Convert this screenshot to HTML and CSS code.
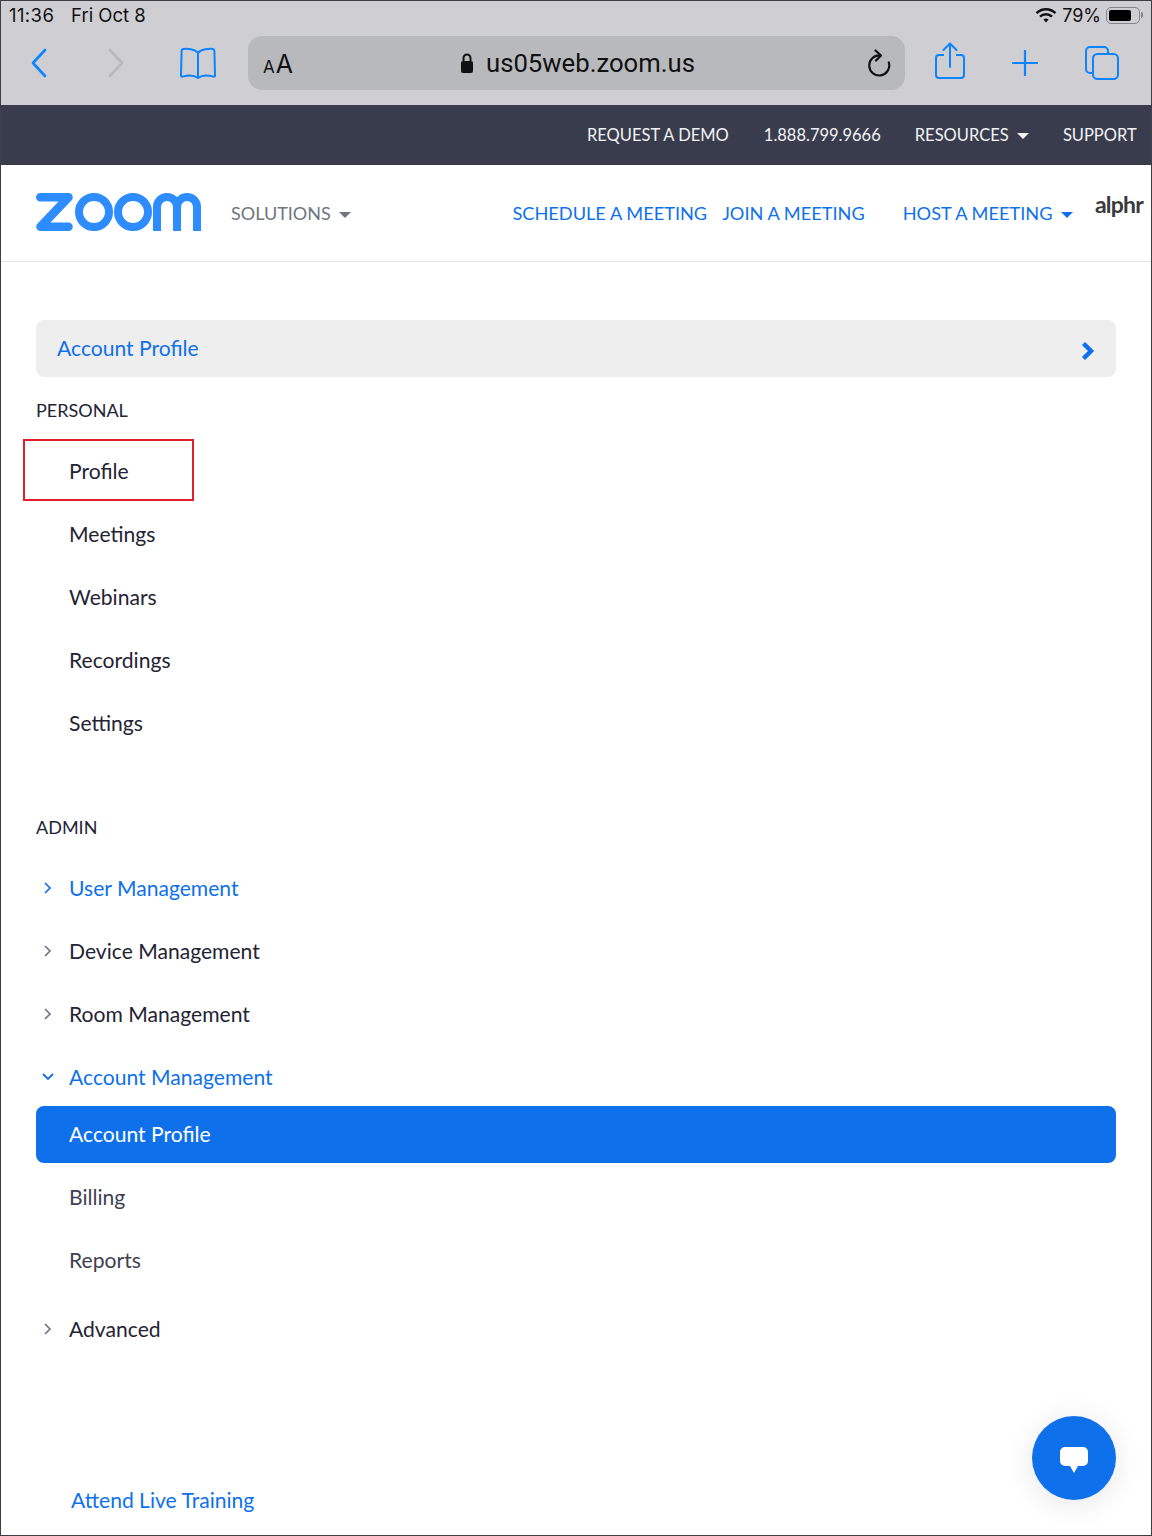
FILE: index.html
```html
<!DOCTYPE html>
<html lang="en">
<head>
<meta charset="utf-8">
<title>Zoom Account Profile</title>
<link rel="stylesheet" href="styles.css">
</head>
<body>
<div class="frame">
  <div class="browser">
    <div class="status">
      <span class="time">11:36</span>
      <span class="date">Fri Oct 8</span>
      <span class="status-right">
        <svg class="wifi" width="22" height="16" viewBox="0 0 22 16"><path d="M1.5 6.2a13.6 13.6 0 0 1 19 0" fill="none" stroke="#111" stroke-width="2.5"/><path d="M5 9.6a8.6 8.6 0 0 1 12 0" fill="none" stroke="#111" stroke-width="2.5"/><path d="M8.4 12.6a3.9 3.9 0 0 1 5.2 0L11 15.4z" fill="#111"/></svg>
        <span class="pct">79%</span>
        <span class="battery"><span class="battery-fill"></span></span>
        <span class="battery-tip"></span>
      </span>
    </div>
    <div class="toolbar">
      <svg class="ic back" width="18" height="30" viewBox="0 0 18 30"><path d="M15 2 3 15l12 13" fill="none" stroke="#0a84ff" stroke-width="2.6" stroke-linecap="round" stroke-linejoin="round"/></svg>
      <svg class="ic forward" width="18" height="30" viewBox="0 0 18 30"><path d="M3 2l12 13L3 28" fill="none" stroke="#b9b9bd" stroke-width="2.6" stroke-linecap="round" stroke-linejoin="round"/></svg>
      <svg class="ic book" width="36" height="32" viewBox="0 0 36 32"><path d="M18 6C15 2 7 1.500 3 2c-1 .2-1.400 1-1.400 2L1 28.500c0 .8.600 1.300 1.400 1.100 5-1.300 12-1.300 15.600 1.400 3.600-2.700 10.600-2.700 15.600-1.400.8.200 1.400-.3 1.400-1.100L34.400 4c0-1-.4-1.800-1.400-2-4-.5-12 0-15 4zM18 6v25" fill="none" stroke="#0a84ff" stroke-width="2"/></svg>
      <div class="url">
        <span class="aa"><span class="aa-small">A</span>A</span>
        <span class="address">
          <svg width="14" height="22" viewBox="0 0 14 22"><path d="M3.500 9V6a3.500 3.500 0 0 1 7 0v3" fill="none" stroke="#111" stroke-width="2"/><rect x="1" y="9" width="12" height="12" rx="2" fill="#111"/></svg>
          <span>us05web.zoom.us</span>
        </span>
        <svg class="reload" width="26" height="30" viewBox="0 0 26 30"><path d="M15 6.500a10 10 0 1 0 8.800 7" fill="none" stroke="#111" stroke-width="2.200" stroke-linecap="round"/><path d="M10.500 1.500 16 6.500l-5 5" fill="none" stroke="#111" stroke-width="2.200" stroke-linecap="round" stroke-linejoin="round"/></svg>
      </div>
      <svg class="ic share" width="30" height="38" viewBox="0 0 30 38"><path d="M9 13H4a3 3 0 0 0-3 3v17a3 3 0 0 0 3 3h22a3 3 0 0 0 3-3V16a3 3 0 0 0-3-3h-5" fill="none" stroke="#0a84ff" stroke-width="2"/><path d="M15 25V2M8.500 8 15 1.500 21.500 8" fill="none" stroke="#0a84ff" stroke-width="2" stroke-linecap="round" stroke-linejoin="round"/></svg>
      <svg class="ic plus" width="26" height="26" viewBox="0 0 26 26"><path d="M13 1v24M1 13h24" fill="none" stroke="#0a84ff" stroke-width="2.200" stroke-linecap="round"/></svg>
      <svg class="ic tabs" width="34" height="34" viewBox="0 0 34 34"><path d="M7 27H5a4 4 0 0 1-4-4V5a4 4 0 0 1 4-4h14a4 4 0 0 1 4 4v3" fill="none" stroke="#0a84ff" stroke-width="2"/><rect x="8" y="8" width="25" height="25" rx="4.500" fill="none" stroke="#0a84ff" stroke-width="2"/></svg>
    </div>
  </div>

  <div class="topbar">
    <a class="top-link req">REQUEST A DEMO</a>
    <a class="top-link phone">1.888.799.9666</a>
    <a class="top-link res">RESOURCES <i class="caret caret-light"></i></a>
    <a class="top-link sup">SUPPORT</a>
  </div>

  <header class="header">
    <svg class="logo" width="166" height="40" viewBox="0 0 166 40" role="img" aria-label="zoom">
      <g fill="none" stroke="#2d8cff">
        <path d="M4.300 4.300H32.500L4.500 33.700H32.500" stroke-width="8.600" stroke-linecap="round" stroke-linejoin="round"/>
        <circle cx="58" cy="19" r="15" stroke-width="8"/>
        <circle cx="97" cy="19" r="15" stroke-width="8"/>
        <path d="M121 38V14a10 10 0 0 1 20 0V38M141 14a10 10 0 0 1 20 0V38" stroke-width="8"/>
      </g>
    </svg>
    <a class="solutions">SOLUTIONS <i class="caret caret-gray"></i></a>
    <nav class="main-nav">
      <a class="schedule">SCHEDULE A MEETING</a>
      <a class="join">JOIN A MEETING</a>
      <a class="host">HOST A MEETING <i class="caret caret-blue"></i></a>
    </nav>
    <span class="alphr">alphr</span>
  </header>

  <main class="content">
    <div class="dropdown">
      <span>Account Profile</span>
      <svg class="dropdown-chev" width="14" height="18" viewBox="0 0 14 18"><path d="M2.500 1.500 10 9l-7.500 7.500" fill="none" stroke="#0e71eb" stroke-width="4.400"/></svg>
    </div>

    <h2 class="section personal">PERSONAL</h2>
    <ul class="menu">
      <li class="item boxed">Profile</li>
      <li class="item">Meetings</li>
      <li class="item">Webinars</li>
      <li class="item">Recordings</li>
      <li class="item">Settings</li>
    </ul>

    <h2 class="section admin">ADMIN</h2>
    <ul class="menu">
      <li class="item blue"><svg class="chev" width="10" height="14" viewBox="0 0 10 14"><path d="M2 2l5 5-5 5" fill="none" stroke="#0e71eb" stroke-width="1.700"/></svg>User Management</li>
      <li class="item"><svg class="chev" width="10" height="14" viewBox="0 0 10 14"><path d="M2 2l5 5-5 5" fill="none" stroke="#747487" stroke-width="1.700"/></svg>Device Management</li>
      <li class="item"><svg class="chev" width="10" height="14" viewBox="0 0 10 14"><path d="M2 2l5 5-5 5" fill="none" stroke="#747487" stroke-width="1.700"/></svg>Room Management</li>
      <li class="item blue open"><svg class="chev chev-open" width="14" height="14" viewBox="0 0 14 14"><path d="M2 4l5 5 5-5" fill="none" stroke="#0e71eb" stroke-width="1.800"/></svg>Account Management</li>
      <li class="item active">Account Profile</li>
      <li class="item sub">Billing</li>
      <li class="item sub">Reports</li>
      <li class="item advanced"><svg class="chev" width="10" height="14" viewBox="0 0 10 14"><path d="M2 2l5 5-5 5" fill="none" stroke="#747487" stroke-width="1.700"/></svg>Advanced</li>
    </ul>

    <a class="training">Attend Live Training</a>
  </main>

  <button class="chat" aria-label="Chat">
    <svg width="28" height="26" viewBox="0 0 28 26"><path d="M5 0h18a5 5 0 0 1 5 5v9a5 5 0 0 1-5 5h-5l-4 7-4-7H5a5 5 0 0 1-5-5V5a5 5 0 0 1 5-5z" fill="#fff"/></svg>
  </button>
</div>
</body>
</html>
```

FILE: styles.css
```css
*, *::before, *::after { box-sizing: border-box; }
html, body { margin: 0; padding: 0; background: #fff; }
body { font-family: Lato, "Liberation Sans", sans-serif; }
a { text-decoration: none; }

.frame {
  position: relative;
  width: 1152px;
  height: 1536px;
  overflow: hidden;
  border: 1px solid #3d3e48;
  display: flex;
  flex-direction: column;
}

/* Safari chrome */
.browser { height: 104px; background: #cfced3; font-family: Inter, "Liberation Sans", sans-serif; color: #111; }
.status { height: 28px; display: flex; align-items: center; font-size: 18.500px; padding-left: 8px; padding-right: 8px; margin-bottom: 1px; }
.time { width: 62px; letter-spacing: .4px; }
.status-right { margin-left: auto; display: flex; align-items: center; }
.wifi { margin-right: 5px; }
.pct { margin-right: 5px; font-size: 18px; }
.battery { width: 34px; height: 17px; border: 1px solid #85858a; border-radius: 5px; padding: 2px; display: block; }
.battery-fill { display: block; width: 78%; height: 100%; background: #000; border-radius: 2px; }
.battery-tip { width: 2px; height: 6px; background: #85858a; margin-left: 1px; border-radius: 0 2px 2px 0; }

.toolbar { display: flex; align-items: center; height: 68px; padding-bottom: 2px; }
.back { margin-left: 29px; }
.forward { margin-left: 59px; }
.book { margin-left: 55px; }
.url {
  margin-left: 32px;
  width: 657px;
  height: 54px;
  border-radius: 14px;
  background: #b8b9bd;
  position: relative;
  display: flex;
  align-items: center;
  padding: 2px 14px 0 15px;
  justify-content: space-between;
}
.aa { font-size: 25px; letter-spacing: 1px; }
.aa-small { font-size: 17px; }
.address { display: flex; align-items: center; gap: 12px; font-family: Roboto, sans-serif; font-size: 25.700px; position: absolute; left: 212px; top: 12px; }
.share { margin-left: 30px; margin-top: -4px; }
.plus { margin-left: 47px; }
.tabs { margin-left: 47px; }

/* Top bar */
.topbar {
  height: 60px;
  background: #393c4d;
  display: flex;
  align-items: center;
  padding-left: 586px;
  font-size: 16.500px;
}
.top-link { color: #f2f2f5; white-space: nowrap; }
.phone { margin-left: 35px; }
.res { margin-left: 34px; }
.sup { margin-left: 34px; }

.caret { display: inline-block; width: 0; height: 0; border-left: 6px solid transparent; border-right: 6px solid transparent; border-top: 6px solid; margin-left: 4px; vertical-align: 2px; }
.caret-light { color: #f2f2f5; }
.caret-gray { color: #6e7680; }
.caret-blue { color: #0e71eb; }

/* Header */
.header {
  height: 97px;
  border-bottom: 1px solid #e6e6e8;
  display: flex;
  align-items: center;
  padding-left: 35px;
  position: relative;
}
.logo { display: block; }
.solutions { margin-left: 29px; color: #6e7680; font-size: 18px; }
.main-nav { display: flex; color: #0e71eb; font-size: 18.200px; margin-left: 161px; }
.join { margin-left: 15px; }
.host { margin-left: 38px; }
.alphr { position: absolute; left: 1094px; top: 24px; font-weight: 700; font-size: 23px; letter-spacing: -.8px; color: #3a3a3c; line-height: 30px; }

/* Content */
.content { flex: 1; padding: 58px 35px 0; font-size: 21.100px; color: #232333; }
.dropdown {
  height: 57px;
  background: #eeeeee;
  border-radius: 8px;
  display: flex;
  align-items: center;
  justify-content: space-between;
  padding: 0 21px 2px;
  color: #0e71eb;
}
.dropdown-chev { margin-top: 6px; }
.section { margin: 0; font-weight: 400; font-size: 18px; line-height: 24px; color: #232333; }
.personal { margin-top: 21px; margin-bottom: 18px; }
.admin { margin-top: 60px; margin-bottom: 18px; }
.menu { list-style: none; margin: 0; padding: 0; }
.item { height: 63px; display: flex; align-items: center; padding: 0 0 2px 33px; position: relative; }
.blue { color: #0e71eb; }
.boxed::after { content: ""; position: absolute; left: -13px; top: -1px; width: 171px; height: 62px; border: 2px solid #e2202c; }
.chev { position: absolute; left: 7px; top: 24px; }
.chev-open { left: 5px; top: 24px; }
.open { height: 60px; padding-bottom: 0; }
.active { height: 57px; background: #0e71eb; color: #fff; border-radius: 8px; margin-bottom: 3px; }
.sub { color: #3f3f50; }
.advanced { margin-top: 6px; }
.training { display: block; margin-top: 126px; margin-left: 35px; color: #0e71eb; }

.chat {
  position: absolute;
  left: 1031px;
  top: 1415px;
  width: 84px;
  height: 84px;
  border: 0;
  border-radius: 50%;
  background: #0e71eb;
  box-shadow: 0 4px 30px rgba(0,0,0,.10);
  display: flex;
  align-items: center;
  justify-content: center;
  padding: 3px 0 0;
}
```
